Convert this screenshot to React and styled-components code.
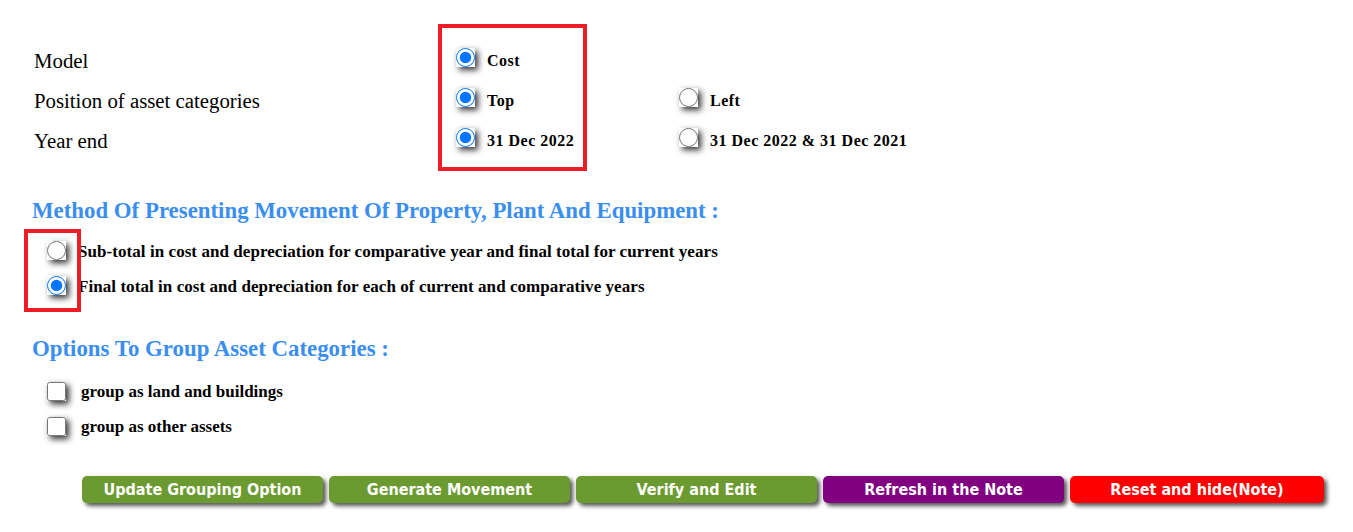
import React from "react";
import styled, { createGlobalStyle } from "styled-components";

const GlobalStyle = createGlobalStyle`
  body {
    margin: 0;
    background: #ffffff;
    font-family: "Liberation Serif", "Times New Roman", serif;
    color: #000000;
  }
`;

const Page = styled.div`
  padding: 41px 0 20px 34px;
`;

const SettingsGrid = styled.div`
  display: grid;
  grid-template-columns: 422px 223px auto;
  grid-auto-rows: 40px;
  align-items: center;
`;

const RowLabel = styled.div`
  font-size: 20.8px;
  line-height: 40px;
  grid-column: 1;
  grid-row: ${({ row }) => row};
`;

const Choice = styled.label`
  display: flex;
  align-items: center;
  gap: 12px;
  font-size: 16px;
  letter-spacing: 0.5px;
  font-weight: bold;
  grid-column: ${({ col }) => col};
  grid-row: ${({ row }) => row};
`;

const Radio = styled.input.attrs({ type: "radio" })`
  width: 19px;
  height: 19px;
  margin: 0 0 ${({ lift }) => (lift ? lift * 2 : 0)}px;
  box-shadow: 3px 3px 6px #333;
  grid-column: ${({ col }) => col || "auto"};
  grid-row: ${({ row }) => row || "auto"};
`;

const Check = styled.input.attrs({ type: "checkbox" })`
  width: 19px;
  height: 19px;
  margin: 0;
  box-shadow: 3px 3px 6px #333;
`;

const Highlight = styled.div`
  grid-column: ${({ col }) => col};
  grid-row: ${({ rows }) => rows};
  align-self: stretch;
  border: 4px solid #ee1c25;
  margin: ${({ m }) => m};
  width: ${({ w }) => w}px;
  box-sizing: border-box;
  pointer-events: none;
  z-index: 1;
`;

const Heading = styled.h2`
  margin: ${({ top }) => top}px 0 0 -2px;
  font-size: 22.85px;
  line-height: 30px;
  font-weight: bold;
  color: #3a8ef0;
`;

const MethodGrid = styled.div`
  display: grid;
  grid-template-columns: 31px auto;
  grid-auto-rows: 35px;
  align-items: center;
  margin-top: 8px;
  padding-left: 13px;
`;

const OptionText = styled.span`
  font-size: 17px;
  letter-spacing: 0.06px;
  font-weight: bold;
  grid-column: 2;
  grid-row: ${({ row }) => row};
`;

const CheckList = styled.div`
  display: flex;
  flex-direction: column;
  margin-top: 10px;
  padding-left: 13px;
`;

const CheckRow = styled.label`
  display: flex;
  align-items: center;
  gap: 15px;
  height: 35px;
  font-size: 17px;
  font-weight: bold;
`;

const ButtonBar = styled.div`
  display: flex;
  gap: 6px;
  margin: 32px 0 0 48px;
`;

const ActionButton = styled.button`
  width: ${({ w }) => w || 241}px;
  height: 27px;
  border: none;
  border-radius: 5px;
  background: ${({ bg }) => bg};
  color: #ffffff;
  font-family: "DejaVu Sans Condensed", "DejaVu Sans", sans-serif;
  font-weight: bold;
  font-size: 16px;
  box-shadow: 3px 3px 4px #555;
  padding: 0;
  cursor: pointer;
`;

export default function App() {
  return (
    <Page>
      <GlobalStyle />
      <SettingsGrid>
        <RowLabel row={1}>Model</RowLabel>
        <RowLabel row={2}>Position of asset categories</RowLabel>
        <RowLabel row={3}>Year end</RowLabel>

        <Choice col={2} row={1}>
          <Radio name="model" lift={4} defaultChecked /> Cost
        </Choice>
        <Choice col={2} row={2}>
          <Radio name="position" lift={4} defaultChecked /> Top
        </Choice>
        <Choice col={3} row={2}>
          <Radio name="position" lift={4} /> Left
        </Choice>
        <Choice col={2} row={3}>
          <Radio name="year" lift={4} defaultChecked /> 31 Dec 2022
        </Choice>
        <Choice col={3} row={3}>
          <Radio name="year" lift={4} /> 31 Dec 2022 &amp; 31 Dec 2021
        </Choice>

        <Highlight col={2} rows="1 / 4" m="-17px 0 -10px -18px" w={149} />
      </SettingsGrid>

      <Heading top={35}>
        Method Of Presenting Movement Of Property, Plant And Equipment :
      </Heading>
      <MethodGrid>
        <Radio name="method" col={1} row={1} lift={1} />
        <OptionText row={1}>
          Sub-total in cost and depreciation for comparative year and final
          total for current years
        </OptionText>
        <Radio name="method" col={1} row={2} lift={1} defaultChecked />
        <OptionText row={2}>
          Final total in cost and depreciation for each of current and
          comparative years
        </OptionText>
        <Highlight col={1} rows="1 / 3" m="-5px 0 -8px -23px" w={57} />
      </MethodGrid>

      <Heading top={30}>Options To Group Asset Categories :</Heading>
      <CheckList>
        <CheckRow>
          <Check /> group as land and buildings
        </CheckRow>
        <CheckRow>
          <Check /> group as other assets
        </CheckRow>
      </CheckList>

      <ButtonBar>
        <ActionButton bg="#6b9a30">Update Grouping Option</ActionButton>
        <ActionButton bg="#6b9a30">Generate Movement</ActionButton>
        <ActionButton bg="#6b9a30">Verify and Edit</ActionButton>
        <ActionButton bg="#800080">Refresh in the Note</ActionButton>
        <ActionButton bg="#ff0000" w={254}>
          Reset and hide(Note)
        </ActionButton>
      </ButtonBar>
    </Page>
  );
}
